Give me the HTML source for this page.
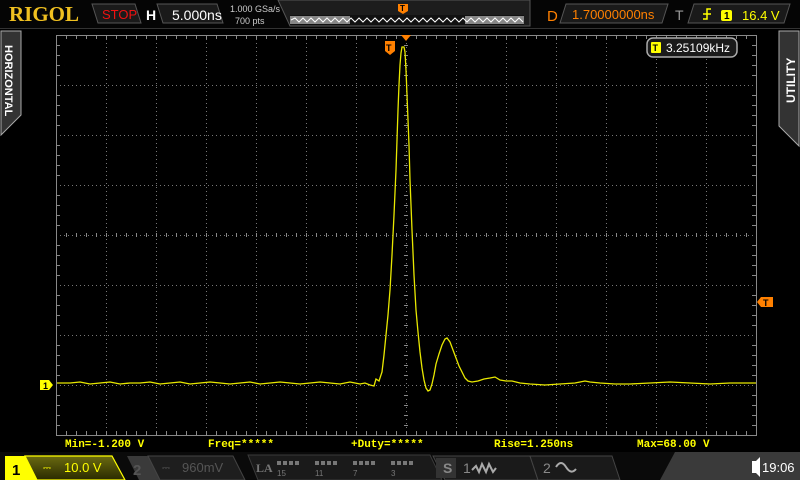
<!DOCTYPE html>
<html><head><meta charset="utf-8"><style>
html,body{margin:0;padding:0;background:#000;width:800px;height:480px;overflow:hidden}
svg{display:block}
text{font-family:"Liberation Sans",sans-serif}
.m{font-family:"Liberation Mono",monospace;font-weight:bold;font-size:11px;fill:#ffff00}
</style></head><body>
<svg width="800" height="480" viewBox="0 0 800 480" xmlns="http://www.w3.org/2000/svg">
<defs>
<linearGradient id="yb" x1="0" y1="0" x2="0" y2="1"><stop offset="0" stop-color="#6a6a10"/><stop offset="1" stop-color="#2a2a00"/></linearGradient>
</defs>
<rect width="800" height="480" fill="#000"/>
<!-- top bar -->
<rect x="0" y="0" width="800" height="28" fill="#050505"/>
<line x1="0" y1="28.5" x2="800" y2="28.5" stroke="#333"/>
<text x="9" y="21" style="font-family:'Liberation Serif',serif" font-weight="bold" font-size="21" fill="#f0c020">RIGOL</text>
<polygon points="92,4 135,4 141,23 98,23" fill="#1a1a1a" stroke="#555"/>
<text x="102" y="19" font-size="13" fill="#ee1111">STOP</text>
<text x="146" y="20" font-size="14" font-weight="bold" fill="#fff">H</text>
<polygon points="157,4 217,4 223,23 163,23" fill="#1a1a1a" stroke="#555"/>
<text x="172" y="20" font-size="14" fill="#fff">5.000ns</text>
<text x="230" y="12" font-size="9" fill="#ccc">1.000 GSa/s</text>
<text x="235" y="24" font-size="9" fill="#ccc">700  pts</text>
<polygon points="278,0 530,0 530,26 290,26" fill="#1d1d1d" stroke="#555"/>
<rect x="290" y="15" width="234" height="10" fill="#111"/>
<rect x="290" y="16" width="60" height="8" fill="#888"/>
<rect x="465" y="16" width="59" height="8" fill="#888"/>
<polyline points="291,20 295,18 299,22 303,18 307,22 311,18 315,22 319,18 323,22 327,18 331,22 335,18 339,22 343,18 347,22 351,18 355,22 359,18 363,22 367,18 371,22 375,18 379,22 383,18 387,22 391,18 395,22 399,18 403,22 407,18 411,22 415,18 419,22 423,18 427,22 431,18 435,22 439,18 443,22 447,18 451,22 455,18 459,22 463,18 467,22 471,18 475,22 479,18 483,22 487,18 491,22 495,18 499,22 503,18 507,22 511,18 515,22 519,18 523,22" fill="none" stroke="#fff" stroke-width="1"/>
<polygon points="398,4 408,4 408,11 403,14 398,11" fill="#ff8000"/>
<text x="400" y="11" font-size="8" font-weight="bold" fill="#000">T</text>
<text x="547" y="21" font-size="15" fill="#ff8000">D</text>
<polygon points="566,4 668,4 662,23 560,23" fill="#1a1a1a" stroke="#555"/>
<text x="572" y="19" font-size="13" fill="#ff8000">1.70000000ns</text>
<text x="675" y="20" font-size="14" fill="#999">T</text>
<polygon points="694,4 790,4 784,23 688,23" fill="#1a1a1a" stroke="#555"/>
<path d="M703,19 h4 v-10 h4 M703,14 h8" stroke="#ff0" stroke-width="1.5" fill="none"/>
<rect x="721" y="10" width="11" height="11" rx="2" fill="#ff0"/>
<text x="724" y="19" font-size="10" font-weight="bold" fill="#000">1</text>
<text x="742" y="20" font-size="13" fill="#ff0">16.4 V</text>
<!-- side tabs -->
<polygon points="1,31 21,31 21,115 1,135" fill="#333" stroke="#aaa"/>
<text transform="translate(5,45) rotate(90)" font-size="11" font-weight="bold" fill="#fff">HORIZONTAL</text>
<polygon points="779,31 799,31 799,146 779,126" fill="#333" stroke="#aaa"/>
<text transform="translate(795,103) rotate(-90)" font-size="12" font-weight="bold" fill="#fff">UTILITY</text>
<!-- grid -->
<g stroke="#777" stroke-width="1" stroke-dasharray="1,3" fill="none">
<path d="M106.5,35V435M156.5,35V435M206.5,35V435M256.5,35V435M306.5,35V435M356.5,35V435M456.5,35V435M506.5,35V435M556.5,35V435M606.5,35V435M656.5,35V435M706.5,35V435"/>
<path d="M56,85.5H756M56,135.5H756M56,185.5H756M56,285.5H756M56,335.5H756M56,385.5H756"/>
<path d="M56,235.5H756M406.5,35V435"/>
</g>
<rect x="56.5" y="35.5" width="700" height="400" fill="none" stroke="#888"/>
<g stroke="#888" stroke-width="1">
<path id="tk" d="M66.5,35v4M76.5,35v4M86.5,35v4M96.5,35v4M106.5,35v4M116.5,35v4M126.5,35v4M136.5,35v4M146.5,35v4M156.5,35v4M166.5,35v4M176.5,35v4M186.5,35v4M196.5,35v4M206.5,35v4M216.5,35v4M226.5,35v4M236.5,35v4M246.5,35v4M256.5,35v4M266.5,35v4M276.5,35v4M286.5,35v4M296.5,35v4M306.5,35v4M316.5,35v4M326.5,35v4M336.5,35v4M346.5,35v4M356.5,35v4M366.5,35v4M376.5,35v4M386.5,35v4M396.5,35v4M406.5,35v4M416.5,35v4M426.5,35v4M436.5,35v4M446.5,35v4M456.5,35v4M466.5,35v4M476.5,35v4M486.5,35v4M496.5,35v4M506.5,35v4M516.5,35v4M526.5,35v4M536.5,35v4M546.5,35v4M556.5,35v4M566.5,35v4M576.5,35v4M586.5,35v4M596.5,35v4M606.5,35v4M616.5,35v4M626.5,35v4M636.5,35v4M646.5,35v4M656.5,35v4M666.5,35v4M676.5,35v4M686.5,35v4M696.5,35v4M706.5,35v4M716.5,35v4M726.5,35v4M736.5,35v4M746.5,35v4"/>
<use href="#tk" transform="translate(0,396)"/>
<use href="#tk" transform="translate(0,198)"/>
<path id="vt" d="M56,45.5h4M56,55.5h4M56,65.5h4M56,75.5h4M56,95.5h4M56,105.5h4M56,115.5h4M56,125.5h4M56,145.5h4M56,155.5h4M56,165.5h4M56,175.5h4M56,195.5h4M56,205.5h4M56,215.5h4M56,225.5h4M56,245.5h4M56,255.5h4M56,265.5h4M56,275.5h4M56,295.5h4M56,305.5h4M56,315.5h4M56,325.5h4M56,345.5h4M56,355.5h4M56,365.5h4M56,375.5h4M56,395.5h4M56,405.5h4M56,415.5h4M56,425.5h4"/>
<use href="#vt" transform="translate(696,0)"/>
<use href="#vt" transform="translate(348,0)"/>
</g>
<!-- waveform -->
<polyline fill="none" stroke="#e8e800" stroke-width="1.3" points="57,383 70,383 80,382 90,384 100,383 110,382 120,384 130,383 140,383 150,382 160,384 170,383 180,382 190,384 200,383 210,382 220,383 230,384 240,383 250,382 260,384 270,383 280,382 290,383 300,384 310,383 320,382 330,383 340,384 350,382 355,383 360,384 365,383 370,385 374,386 376,379 379,381 382,372 384,355 386,335 388,315 390,290 392,255 394,215 396,170 397,140 398,110 399,85 400,65 401,53 402,47 404,47 405,52 406,70 407,95 408,120 409,145 410,180 412,230 414,275 416,310 418,332 420,352 422,368 424,380 426,388 428,391 430,390 432,384 434,375 436,364 439,354 442,345 445,339 447,338 450,342 453,350 456,358 459,366 462,372 465,378 468,381 472,382 478,381 484,379 490,378 495,377 500,380 506,381 512,381 520,383 530,384 545,385 560,384 575,383 585,381 590,382 600,383 615,384 630,384 650,383 670,382 690,383 710,384 730,383 756,383"/>
<!-- markers -->
<polygon points="40,380 49,380 53,385 49,390 40,390" fill="#ff0"/>
<text x="43" y="389" font-size="9" font-weight="bold" fill="#000">1</text>
<polygon points="761,297 773,297 773,307 761,307 757,302" fill="#ff8000"/>
<text x="763" y="306" font-size="9" font-weight="bold" fill="#000">T</text>
<polygon points="401,35 411,35 406,41" fill="#ff8000"/>
<path d="M385,41 h10 v10 l-5,4 l-5,-4 z" fill="#ff8000"/>
<text x="386" y="51" font-size="9" font-weight="bold" fill="#000">T</text>
<!-- freq box -->
<rect x="647" y="38" width="90" height="19" rx="6" fill="#1a1a1a" stroke="#aaa" stroke-width="1.5"/>
<rect x="651" y="42" width="10" height="11" rx="1" fill="#ff0"/>
<text x="652.5" y="51" font-size="9" font-weight="bold" fill="#000">T</text>
<text x="666" y="52" font-size="12" fill="#fff">3.25109kHz</text>
<!-- measurements -->
<text class="m" x="65" y="447">Min=-1.200 V</text>
<text class="m" x="208" y="447">Freq=*****</text>
<text class="m" x="351" y="447">+Duty=*****</text>
<text class="m" x="494" y="447">Rise=1.250ns</text>
<text class="m" x="637" y="447">Max=68.00 V</text>
<!-- bottom bar -->
<rect x="0" y="452" width="800" height="28" fill="#0a0a0a"/>
<polygon points="675,452 800,452 800,480 660,480" fill="#3a3a3a"/>
<polygon points="5,456 25,456 37,480 5,480" fill="#ff0"/>
<text x="12" y="475" font-size="15" font-weight="bold" fill="#000">1</text>
<polygon points="25,456 112,456 125,480 37,480" fill="url(#yb)" stroke="#ff0" stroke-width="1.2"/>
<text x="43" y="471" font-size="10" fill="#ff0">⎓</text>
<text x="64" y="472" font-size="13" fill="#ff0">10.0 V</text>
<polygon points="127,456 148,456 160,480 139,480" fill="#3a3a3a"/>
<text x="133" y="475" font-size="15" font-weight="bold" fill="#555">2</text>
<polygon points="148,456 233,456 245,480 160,480" fill="#1e1e1e" stroke="#444"/>
<text x="162" y="471" font-size="10" fill="#555">⎓</text>
<text x="182" y="472" font-size="13" fill="#555">960mV</text>
<polygon points="248,455 430,455 442,480 258,480" fill="#1a1a1a" stroke="#3a3a3a"/>
<text x="256" y="472" font-size="12" font-weight="bold" style="font-family:'Liberation Serif',serif" fill="#777">LA</text>
<g fill="#777"><rect x="277" y="461" width="4" height="4"/><rect x="283" y="461" width="4" height="4"/><rect x="289" y="461" width="4" height="4"/><rect x="295" y="461" width="4" height="4"/><rect x="315" y="461" width="4" height="4"/><rect x="321" y="461" width="4" height="4"/><rect x="327" y="461" width="4" height="4"/><rect x="333" y="461" width="4" height="4"/><rect x="353" y="461" width="4" height="4"/><rect x="359" y="461" width="4" height="4"/><rect x="365" y="461" width="4" height="4"/><rect x="371" y="461" width="4" height="4"/><rect x="391" y="461" width="4" height="4"/><rect x="397" y="461" width="4" height="4"/><rect x="403" y="461" width="4" height="4"/><rect x="409" y="461" width="4" height="4"/></g>
<g font-size="8" fill="#777"><text x="277" y="476">15</text><text x="315" y="476">11</text><text x="353" y="476">7</text><text x="391" y="476">3</text></g>
<polygon points="433,456 530,456 538,480 445,480" fill="#1a1a1a" stroke="#444"/>
<polygon points="530,456 612,456 620,480 538,480" fill="#1a1a1a" stroke="#444"/>
<rect x="436" y="458" width="20" height="20" fill="#333"/>
<text x="443" y="473" font-size="14" font-weight="bold" fill="#888">S</text>
<text x="463" y="473" font-size="14" fill="#888">1</text>
<polyline points="472,470 476,466 479,472 482,464 486,472 489,464 493,472 496,468" fill="none" stroke="#aaa" stroke-width="2"/>
<text x="543" y="473" font-size="14" fill="#888">2</text>
<path d="M556,467 q5,-8 10,0 t10,2" fill="none" stroke="#aaa" stroke-width="2"/>
<polygon points="752,461 756,461 760,457 760,477 756,473 752,473" fill="#fff"/>
<text x="762" y="472" font-size="13" fill="#fff">19:06</text>
</svg>
</body></html>
